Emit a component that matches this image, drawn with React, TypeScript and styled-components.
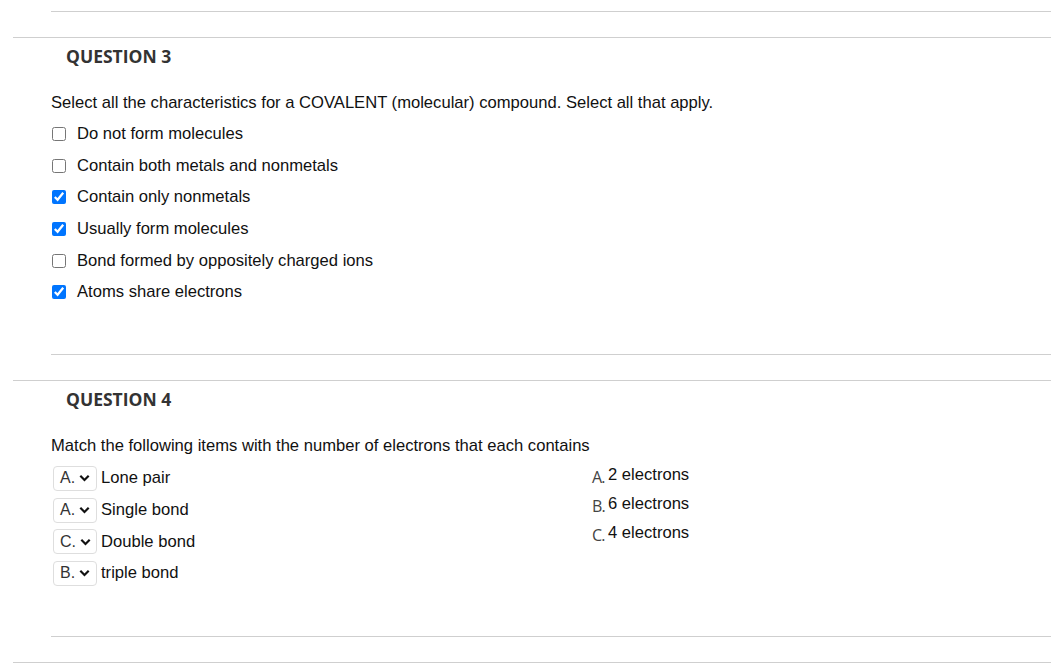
import styled, { createGlobalStyle } from 'styled-components'

const GlobalStyle = createGlobalStyle`
  body {
    margin: 0;
    background: #fff;
    font-family: "Liberation Sans", Arial, sans-serif;
    color: #111;
  }
`

const Page = styled.div`
  width: 1051px;
  padding-top: 11px;
`

const Divider = styled.div<{ $indent: number }>`
  height: 1px;
  background: #cfcfcf;
  margin-left: ${({ $indent }) => $indent}px;
`

const Block = styled.section<{ $tail: number }>`
  padding-bottom: ${({ $tail }) => $tail}px;
`

const Inner = styled.div`
  margin-top: 25px;
  border-top: 1px solid #cfcfcf;
  margin-left: 13px;
  padding-left: 38px;
`

const Heading = styled.h3`
  margin: 6px 0 0 15px;
  font-family: "Open Sans", sans-serif;
  font-weight: 700;
  font-size: 17.5px;
  line-height: 24px;
  color: #333;
`

const Prompt = styled.p`
  margin: 24.5px 0 0 0;
  font-size: 16.6px;
  line-height: 20px;
`

const Options = styled.div`
  margin-top: 6px;
`

const OptionRow = styled.label`
  display: flex;
  align-items: center;
  height: 31.6px;
  font-size: 16.6px;
  gap: 11px;
  padding-left: 1px;
`

const Box = styled.input`
  width: 14px;
  height: 14px;
  margin: 0;
  accent-color: #0075ff;
`

const MatchArea = styled.div`
  margin-top: 7px;
  display: grid;
  grid-template-columns: 541px 1fr;
`

const MatchRow = styled.div`
  display: flex;
  align-items: center;
  height: 31.7px;
  gap: 4px;
  font-size: 16.6px;
  padding-left: 2px;
`

const Select = styled.div`
  box-sizing: border-box;
  width: 44px;
  height: 25px;
  border: 1px solid #dedede;
  border-radius: 4px;
  display: flex;
  align-items: center;
  padding-left: 6px;
  gap: 4px;
  font-size: 16px;
  color: #333;
`

const Answers = styled.div`
  margin-top: -2.5px;
`

const AnswerRow = styled.div`
  display: flex;
  align-items: center;
  height: 29px;
  font-size: 16.6px;
`

const Letter = styled.span`
  font-family: "Open Sans", sans-serif;
  font-size: 16px;
  color: #444;
  width: 16px;
  padding-top: 4px;
  letter-spacing: -0.8px;
`

const Chevron = () => (
  <svg width="11" height="8" viewBox="0 0 11 8">
    <path d="M1.3 1.8l4.2 4.2 4.2-4.2" fill="none" stroke="#111" strokeWidth="2.2" />
  </svg>
)

const q3 = [
  { text: 'Do not form molecules', on: false },
  { text: 'Contain both metals and nonmetals', on: false },
  { text: 'Contain only nonmetals', on: true },
  { text: 'Usually form molecules', on: true },
  { text: 'Bond formed by oppositely charged ions', on: false },
  { text: 'Atoms share electrons', on: true },
]

const matches = [
  { pick: 'A.', text: 'Lone pair' },
  { pick: 'A.', text: 'Single bond' },
  { pick: 'C.', text: 'Double bond' },
  { pick: 'B.', text: 'triple bond' },
]

const answers = [
  { letter: 'A.', text: '2 electrons' },
  { letter: 'B.', text: '6 electrons' },
  { letter: 'C.', text: '4 electrons' },
]

export default function App() {
  return (
    <Page>
      <GlobalStyle />
      <Divider $indent={51} />
      <Block $tail={46}>
        <Inner>
          <Heading>QUESTION 3</Heading>
          <Prompt>Select all the characteristics for a COVALENT (molecular) compound. Select all that apply.</Prompt>
          <Options>
            {q3.map((o) => (
              <OptionRow key={o.text}>
                <Box type="checkbox" defaultChecked={o.on} />
                {o.text}
              </OptionRow>
            ))}
          </Options>
        </Inner>
      </Block>
      <Divider $indent={51} />
      <Block $tail={47}>
        <Inner>
          <Heading>QUESTION 4</Heading>
          <Prompt>Match the following items with the number of electrons that each contains</Prompt>
          <MatchArea>
            <div>
              {matches.map((m) => (
                <MatchRow key={m.text}>
                  <Select>
                    {m.pick}
                    <Chevron />
                  </Select>
                  {m.text}
                </MatchRow>
              ))}
            </div>
            <Answers>
              {answers.map((a) => (
                <AnswerRow key={a.letter}>
                  <Letter>{a.letter}</Letter>
                  {a.text}
                </AnswerRow>
              ))}
            </Answers>
          </MatchArea>
        </Inner>
      </Block>
      <Divider $indent={51} />
      <Block $tail={0}>
        <Inner />
      </Block>
    </Page>
  )
}
